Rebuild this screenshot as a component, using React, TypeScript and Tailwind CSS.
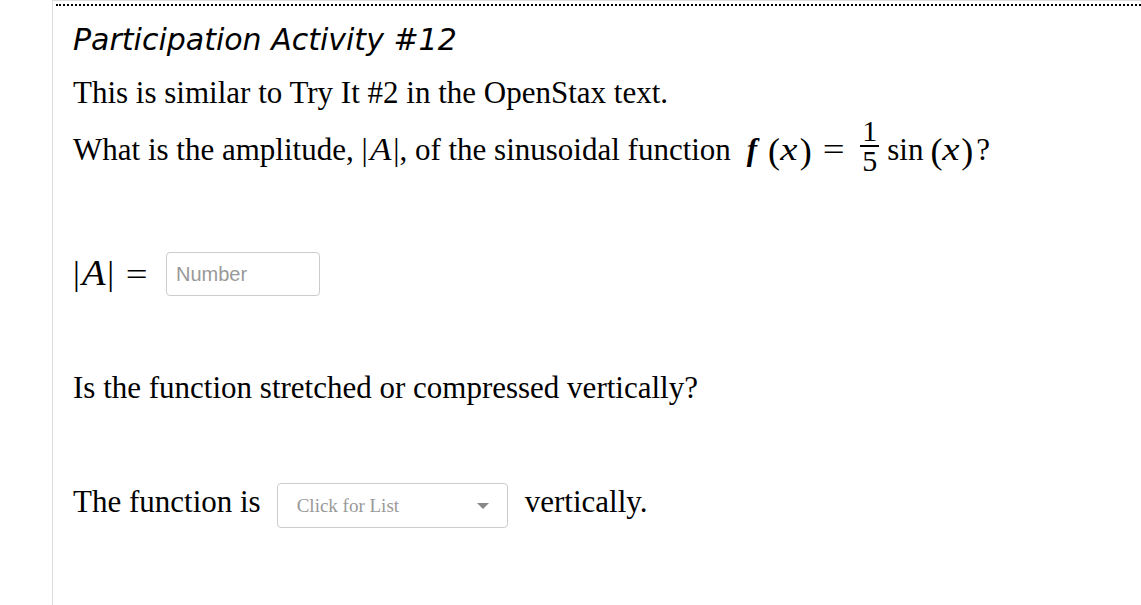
export default function App() {
  return (
    <div className="min-h-[605px] w-[1141px] bg-white pl-[52px]">
      <div className="min-h-[605px] border-l border-t border-[#dcdcdc] pt-[3px]">
        <div className="ml-[3px] border-t-2 border-dotted border-black" />
        <div className="pl-[20px] font-['Liberation_Serif',serif] text-[31px] text-black">
          {/* Title */}
          <h1 className="mt-[16px] h-[36px] font-['Comic_Sans_MS','DejaVu_Sans',sans-serif] text-[30px] italic leading-[36px]">
            Participation Activity #12
          </h1>

          <p className="mt-[17px] h-[36px] leading-[36px]">This is similar to Try It #2 in the OpenStax text.</p>

          {/* Question with inline math */}
          <div className="mt-[19px] flex h-[36px] items-baseline leading-[36px]">
            <span className="whitespace-pre">What is the amplitude, </span>
            <span>|</span>
            <i className="mx-[3px] inline-block scale-x-110 text-[32px]">A</i>
            <span>|</span>
            <span className="whitespace-pre">, of the sinusoidal function </span>
            <i className="ml-[8px] font-bold">f</i>
            <span className="ml-[11px] inline-block translate-y-[3px] text-[36px]">(</span>
            <i className="ml-[2px] inline-block scale-x-125">x</i>
            <span className="ml-[4px] inline-block translate-y-[3px] text-[36px]">)</span>
            <span className="ml-[13px] inline-block scale-x-125">=</span>
            <span className="mb-[5px] ml-[18px] flex flex-col items-center self-center text-[30px] leading-[24px]">
              <span>1</span>
              <span className="my-[2px] h-[2px] w-[19px] bg-black" />
              <span>5</span>
            </span>
            <span className="ml-[8px]">sin</span>
            <span className="ml-[7px] inline-block translate-y-[3px] text-[36px]">(</span>
            <i className="ml-[2px] inline-block scale-x-125">x</i>
            <span className="ml-[3px] inline-block translate-y-[3px] text-[36px]">)</span>
            <span className="ml-[3px]">?</span>
          </div>

          {/* Amplitude answer */}
          <div className="mt-[86px] flex h-[44px] items-center">
            <div className="flex w-[74px] items-baseline">
              <span className="text-[34px]">|</span>
              <i className="mx-[3px] inline-block scale-x-110 text-[35px]">A</i>
              <span className="text-[34px]">|</span>
              <span className="ml-[14px] inline-block scale-x-125">=</span>
            </div>
            <input
              type="text"
              placeholder="Number"
              className="ml-[19px] h-[44px] w-[154px] rounded-[4px] border border-[#cccccc] px-[9px] font-['Liberation_Sans',sans-serif] text-[20px] text-black outline-none placeholder:text-[#999999]"
            />
          </div>

          <p className="mt-[74px] h-[36px] leading-[36px]">Is the function stretched or compressed vertically?</p>

          {/* Dropdown row */}
          <div className="mt-[77px] flex h-[45px] items-center leading-[36px]">
            <span className="mb-[7px]">The function is</span>
            <div className="ml-[16px] flex h-[45px] w-[231px] items-center justify-between rounded-[4px] border border-[#cccccc] pl-[19px] pr-[18px]">
              <span className="text-[19px] leading-[24px] text-[#999999]">Click for List</span>
              <svg width="12" height="6" viewBox="0 0 12 6">
                <path d="M0 0 L12 0 L6 6 Z" fill="#888888" />
              </svg>
            </div>
            <span className="mb-[7px] ml-[17px]">vertically.</span>
          </div>
        </div>
      </div>
    </div>
  );
}
